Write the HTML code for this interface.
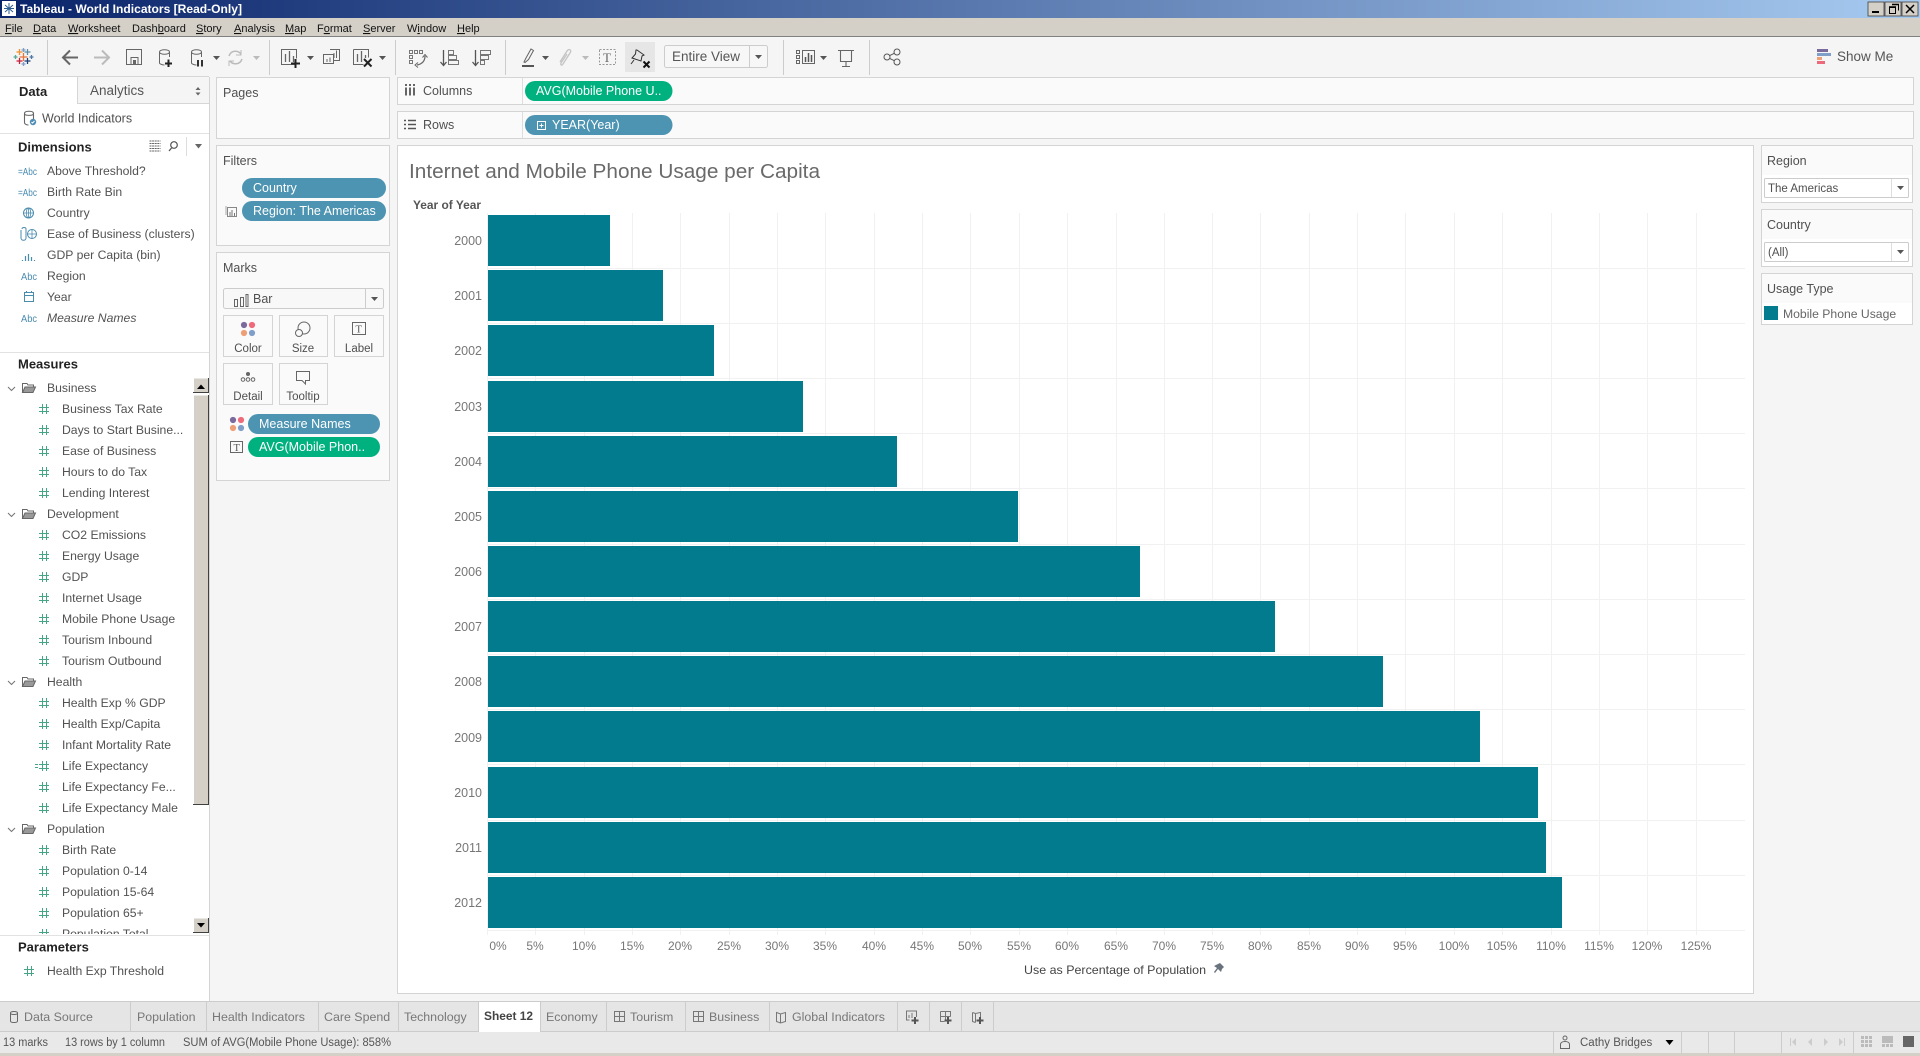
<!DOCTYPE html>
<html><head><meta charset="utf-8"><title>Tableau - World Indicators</title>
<style>
html,body{margin:0;padding:0;background:#f5f5f5;overflow:hidden}
svg{display:block}
text{font-family:"Liberation Sans",sans-serif;font-size:12.5px;fill:#505050}
.l text,text.l{font-size:12.2px;fill:#525252}
.m{font-size:11px;fill:#111}
.b{font-weight:bold;fill:#222;font-size:13px}
.w{fill:#fff}
.g{fill:#777;font-size:12.4px}
.s{font-size:11.5px;fill:#555}
.a{fill:#777;font-size:12px;text-anchor:middle}
.y{fill:#777;font-size:12.5px;text-anchor:end}
.ic{fill:none;stroke:#555;stroke-width:1.2}
.c{fill:#fafafa;stroke:#d4d4d4}
.ln{stroke:#f1f1f1;stroke-width:1;fill:none}
.bar{fill:#027b8e}
</style></head><body>
<svg xmlns="http://www.w3.org/2000/svg" width="1920" height="1056" viewBox="0 0 1920 1056">
<defs>
<linearGradient id="tg" x1="0" x2="1" y1="0" y2="0"><stop offset="0" stop-color="#0a246a"/><stop offset="1" stop-color="#a6caf0"/></linearGradient>
<g id="h" fill="none" stroke="#45a686" stroke-width="1"><path d="M3.5 0v10M7.5 0v10M0 3.5h10M0 7.5h10"/></g>
<g id="f"><path d="M.5 9.5v-9h4.500l1 1.500h5.500v2" fill="none" stroke="#666"/><path d="M.5 9.5l2.500-5.500h10.500l-2.500 5.500z" fill="#999" stroke="#666"/></g>
<path id="ch" d="M0 0l3.500 3.500L7 0" fill="none" stroke="#777" stroke-width="1.100"/>
<path id="dd" d="M0 0h7l-3.500 4z" fill="#555"/>
<path id="ddl" d="M0 0h7l-3.500 4z" fill="#bbb"/>
<g id="dots"><circle cx="4" cy="4" r="3.100" fill="#7b6a9c"/><circle cx="12" cy="4" r="3.100" fill="#ee6a7a"/><circle cx="4" cy="12" r="3.100" fill="#eda077"/><circle cx="12" cy="12" r="3.100" fill="#7f9fc9"/></g>
</defs>

<rect width="1920" height="1056" fill="#f5f5f5"/>

<!-- title bar -->
<rect width="1920" height="18" fill="url(#tg)"/>
<rect x="2" y="1" width="14" height="15" fill="#fff"/>
<path d="M9 3v11M4 8.500h10M5 5l8 7M13 5l-8 7" stroke="#2a5d92" stroke-width="1" fill="none"/>
<text x="20" y="13" textLength="222" lengthAdjust="spacingAndGlyphs" style="font-size:11.500px;font-weight:bold;fill:#fff">Tableau - World Indicators [Read-Only]</text>
<g>
<rect x="1868" y="2" width="16" height="14" fill="#d4d0c8" stroke="#404040" stroke-width=".8"/><rect x="1872" y="11" width="7" height="2" fill="#000"/>
<rect x="1885" y="2" width="16" height="14" fill="#d4d0c8" stroke="#404040" stroke-width=".8"/><path d="M1889.500 7.500h6v6h-6zM1892.500 4.500h6v6" fill="none" stroke="#000"/><path d="M1889 7h7M1892 4.500h7" stroke="#000" stroke-width="1.500"/>
<rect x="1902" y="2" width="16" height="14" fill="#d4d0c8" stroke="#404040" stroke-width=".8"/><path d="M1906 5l8 8M1914 5l-8 8" stroke="#000" stroke-width="1.500"/>
</g>

<!-- menu bar -->
<rect y="18" width="1920" height="18" fill="#d4d0c8"/>
<rect y="36" width="1920" height="1" fill="#808080"/>
<g>
<text class="m" x="5" y="32"><tspan text-decoration="underline">F</tspan>ile</text>
<text class="m" x="33" y="32"><tspan text-decoration="underline">D</tspan>ata</text>
<text class="m" x="68" y="32"><tspan text-decoration="underline">W</tspan>orksheet</text>
<text class="m" x="132" y="32">Dash<tspan text-decoration="underline">b</tspan>oard</text>
<text class="m" x="196" y="32"><tspan text-decoration="underline">S</tspan>tory</text>
<text class="m" x="234" y="32"><tspan text-decoration="underline">A</tspan>nalysis</text>
<text class="m" x="285" y="32"><tspan text-decoration="underline">M</tspan>ap</text>
<text class="m" x="317" y="32">F<tspan text-decoration="underline">o</tspan>rmat</text>
<text class="m" x="363" y="32"><tspan text-decoration="underline">S</tspan>erver</text>
<text class="m" x="407" y="32">W<tspan text-decoration="underline">i</tspan>ndow</text>
<text class="m" x="457" y="32"><tspan text-decoration="underline">H</tspan>elp</text>
</g>

<!-- toolbar separators -->
<path d="M47.500 40v35M269.500 40v35M395.500 40v35M505.500 40v35M783.500 40v35M869.500 40v35" stroke="#ccc"/>
<!-- tableau logo -->
<g fill="none" stroke-width="1.300">
<path d="M19.500 49v6M16.500 52h6" stroke="#f28e2b"/>
<path d="M27.500 49v6M24.500 52h6" stroke="#5b8fa8"/>
<path d="M15.500 55v4M13.500 57h4" stroke="#59a89c"/>
<path d="M23.500 53v8M19.500 57h8" stroke="#e8743b"/>
<path d="M31.500 55v4M29.500 57h4" stroke="#4e79a7"/>
<path d="M19.500 58v6M16.500 61h6" stroke="#c8203c"/>
<path d="M27.500 58v6M24.500 61h6" stroke="#1f3f77"/>
<path d="M23.500 62v4M21.500 64h4" stroke="#7f9fc9"/>
<path d="M23.500 48v4M21.500 50h4" stroke="#7f9fc9"/>
</g>
<!-- back/forward -->
<path d="M78 57.500H63M70 50.500l-7 7 7 7" fill="none" stroke="#666" stroke-width="2"/>
<path d="M94 57.500h15M102 50.500l7 7-7 7" fill="none" stroke="#bbb" stroke-width="2"/>
<!-- save -->
<path d="M126.500 49.500h15v15h-15z" fill="none" stroke="#666"/><path d="M131 57.500h7v7h-7z" fill="none" stroke="#666"/><rect x="133" y="60" width="3" height="4" fill="#666"/>
<!-- ds add -->
<path d="M159.500 52v11c0 1 3 2 5 2M159.500 52c0-3 10-3 10 0v5M159.500 52c0 3 10 3 10 0" fill="none" stroke="#666"/>
<path d="M168.500 59.500v7.500M165 63.500h7" stroke="#222" stroke-width="2"/>
<!-- ds pause -->
<path d="M191.500 52v11c0 1 3 2 5 2M191.500 52c0-3 10-3 10 0v5M191.500 52c0 3 10 3 10 0" fill="none" stroke="#666"/>
<path d="M198 60v6.500M202 60v6.500" stroke="#333" stroke-width="2"/>
<use href="#dd" x="213" y="56"/>
<!-- refresh -->
<path d="M229 56c2-6 9-6 12-2M242 59c-2 6-9 6-12 2" fill="none" stroke="#bbb" stroke-width="1.500"/><path d="M241 50v5h-5M229 66v-5h5" fill="none" stroke="#bbb"/>
<use href="#ddl" x="253" y="56"/>
<!-- new sheet -->
<path d="M295.500 64.500h-14v-15h15v9" fill="none" stroke="#666"/><path d="M285.500 54v8M289.500 51v11M293.500 56v6" stroke="#666" stroke-width="1.300"/>
<path d="M295.500 59v9M291 63.500h9" stroke="#222" stroke-width="2"/>
<use href="#dd" x="307" y="56"/>
<!-- dup -->
<path d="M330 49.500h9.500v11h-6" fill="none" stroke="#666"/><path d="M323.500 54.500h10v9h-10z" fill="#f5f5f5" stroke="#666"/><path d="M334 53v5M336.500 50.500v7.500M327 59v3M330 57.500v4.500" stroke="#666"/>
<!-- clear -->
<path d="M353.500 49.500h15v8M353.500 49.500v15h10" fill="none" stroke="#666"/><path d="M357.500 54v8M361.500 51v11M365.500 55v3" stroke="#666" stroke-width="1.300"/>
<path d="M364 59l7.500 7.500M371.500 59l-7.500 7.500" stroke="#222" stroke-width="2"/>
<use href="#dd" x="379" y="56"/>
<!-- swap -->
<path d="M409.500 50.500h3v3h-3zM414.500 50.500h3v3h-3zM419.500 50.500h3v3h-3zM409.500 55.500h3v3h-3zM409.500 60.500h3v3h-3z" fill="none" stroke="#777"/>
<path d="M425 56c0 5-3 8-8 9" fill="none" stroke="#666" stroke-width="1.200"/><path d="M422.500 57.500l2.500-3 2.500 3M418 62.500l-3 2.500 3 2.500" fill="none" stroke="#666"/>
<!-- sorts -->
<path d="M443.500 50v15M440.500 62l3 3.500 3-3.500" fill="none" stroke="#555" stroke-width="1.300"/><path d="M448.500 50.500h5v4h-5zM448.500 55.500h8v4h-8zM448.500 60.500h10v4h-10z" fill="none" stroke="#777"/>
<path d="M475.500 50v15M472.500 62l3 3.500 3-3.500" fill="none" stroke="#555" stroke-width="1.300"/><path d="M480.500 50.500h10v4h-10zM480.500 55.500h8v4h-8zM480.500 60.500h4v4h-4z" fill="none" stroke="#777"/>
<!-- highlighter -->
<path d="M524 62l2-4 5-9 2.500 1.500-5 9-3.500 3z" fill="none" stroke="#666"/><rect x="522" y="65" width="12" height="2" fill="#555"/>
<use href="#dd" x="542" y="56"/>
<!-- clip -->
<path d="M560 62l7-11c2-3 5-1 3 2l-7 11c-1 2-3 1-2-1l6-9" fill="none" stroke="#c4c4c4" stroke-width="1.300"/>
<use href="#ddl" x="582" y="56"/>
<!-- T -->
<rect x="599.500" y="49.500" width="16" height="15" fill="none" stroke="#999" stroke-dasharray="2 1.500"/>
<text x="603" y="62" style="font-family:'Liberation Serif',serif;font-size:13px;fill:#666">T</text>
<!-- pin -->
<rect x="625" y="42" width="30" height="30" fill="#e6e6e6"/>
<path d="M637 50l7 5-2 1-1 5-9-3 3.500-4 .5-4zM634 60l-3 4" fill="none" stroke="#333" stroke-width="1"/>
<path d="M643.500 61.500l6 6M649.500 61.500l-6 6" stroke="#111" stroke-width="2"/>
<!-- entire view -->
<rect x="664.500" y="45.500" width="103" height="22" rx="2" fill="#f7f7f7" stroke="#ccc"/><path d="M749.500 46v21" stroke="#ccc"/>
<text x="672" y="61" style="font-size:13.500px;fill:#555">Entire View</text>
<use href="#dd" x="755" y="55"/>
<!-- show me mini -->
<path d="M796.500 50.500h3v3h-3zM796.500 55.500h3v3h-3zM796.500 60.500h3v3h-3zM802.500 50.500h12v13h-12z" fill="none" stroke="#666"/><path d="M805.500 57v5M808.500 53v9M811.500 55v7" stroke="#555" stroke-width="1.500"/>
<use href="#dd" x="820" y="56"/>
<!-- present -->
<path d="M838 50.500h16M840.500 50.500v11h11v-11M846 61.500v5M842 66.500h8" fill="none" stroke="#666" stroke-width="1.100"/>
<!-- share -->
<circle cx="887" cy="57" r="3" fill="none" stroke="#555"/><circle cx="897" cy="52" r="3" fill="none" stroke="#555"/><circle cx="897" cy="62" r="3" fill="none" stroke="#555"/><path d="M889.700 55.600l4.600-2.300M889.700 58.400l4.600 2.300" fill="none" stroke="#555"/>
<!-- show me -->
<rect x="1817" y="49" width="11" height="3" fill="#7b6a9c"/><rect x="1817" y="53" width="14" height="3" fill="#7f9fc9"/><rect x="1817" y="57" width="5" height="3" fill="#eda077"/><rect x="1817" y="61" width="8" height="3" fill="#ee6a7a"/>
<text x="1837" y="61" style="font-size:13.500px;fill:#555">Show Me</text>

<!-- left pane -->
<rect x="0" y="77" width="209" height="924" fill="#fff"/>
<rect x="77" y="77" width="132" height="26" fill="#f5f5f5"/>
<path d="M77.500 77v27M77 103.500h132M0 76.500h209" stroke="#d6d6d6"/>
<rect x="209" y="77" width="1" height="924" fill="#d4d4d4"/>
<text x="19" y="96" style="font-weight:bold;font-size:13px;fill:#222">Data</text>
<text x="90" y="95" style="font-size:13.500px;fill:#555">Analytics</text>
<path d="M195.500 90l2.500-3 2.500 3zM195.500 92.500l2.500 3 2.500-3z" fill="#666"/>
<path d="M24.500 113.500c0-3 9-3 9 0v7M24.500 113.500c0 2.500 9 2.500 9 0M24.500 113.500v9c0 1.500 2 2.500 4 2.500" fill="none" stroke="#666" stroke-width="1.100"/>
<circle cx="33" cy="122" r="3.200" fill="#4f8fb5"/><path d="M31.500 122l1 1 2-2" stroke="#fff" fill="none"/>
<text x="42" y="122.500">World Indicators</text>
<rect y="133" width="209" height="1" fill="#e2e2e2"/>

<text class="b" x="18" y="151.500">Dimensions</text>
<path d="M149.500 141h11M149.500 143.500h11M149.500 146h11M149.500 148.500h11M149.500 151h11" stroke="#666" stroke-dasharray="2 .6"/>
<circle cx="174" cy="145" r="3.300" class="ic"/><path d="M171.500 148l-2.500 3" stroke="#555" stroke-width="1.300"/>
<path d="M186.500 137v19" stroke="#ddd"/>
<path d="M195 144h7l-3.500 4.500z" fill="#666"/>

<!-- dimensions -->
<g>
<text x="18" y="175" textLength="19" lengthAdjust="spacingAndGlyphs" style="font-size:10.500px;fill:#4a8bb0">=Abc</text>
<text x="18" y="196" textLength="19" lengthAdjust="spacingAndGlyphs" style="font-size:10.500px;fill:#4a8bb0">=Abc</text>
<circle cx="28.500" cy="213" r="5" fill="none" stroke="#4a8bb0"/><path d="M23.500 213h10M28.500 208v10" stroke="#4a8bb0" stroke-width=".8"/><ellipse cx="28.500" cy="213" rx="2.200" ry="5" fill="none" stroke="#4a8bb0" stroke-width=".8"/>
<path d="M22 229c0-2 4-2 4 0v9c0 3-5 3-5 0v-8" fill="none" stroke="#4a8bb0" stroke-width="1"/><circle cx="32" cy="234" r="4.500" fill="none" stroke="#4a8bb0"/><path d="M27.500 234h9M32 229.500v9" stroke="#4a8bb0" stroke-width=".8"/>
<path d="M22.500 261v-1M25.500 261v-5M28.500 261v-7M31.500 261v-4M34.500 261v-1" stroke="#4a8bb0" stroke-width="1.200"/>
<text x="21" y="280" textLength="16" lengthAdjust="spacingAndGlyphs" style="font-size:10.500px;fill:#4a8bb0">Abc</text>
<rect x="24.500" y="292.500" width="9" height="9" fill="none" stroke="#4a8bb0"/><path d="M24.500 295.500h9M26.500 291v2M31.500 291v2" stroke="#4a8bb0"/>
<text x="21" y="322" textLength="16" lengthAdjust="spacingAndGlyphs" style="font-size:10.500px;fill:#4a8bb0">Abc</text>
</g>
<g class="l">
<text x="47" y="175">Above Threshold?</text>
<text x="47" y="196">Birth Rate Bin</text>
<text x="47" y="217">Country</text>
<text x="47" y="238">Ease of Business (clusters)</text>
<text x="47" y="259">GDP per Capita (bin)</text>
<text x="47" y="280">Region</text>
<text x="47" y="301">Year</text>
<text x="47" y="322" font-style="italic">Measure Names</text>
</g>
<rect y="352" width="209" height="1" fill="#e2e2e2"/>

<!-- measures -->
<text class="b" x="18" y="368.500">Measures</text>
<g class="l">
<use href="#ch" x="8" y="387"/><use href="#f" x="22" y="383"/><text x="47" y="392">Business</text>
<use href="#h" x="39" y="404"/><text x="62" y="413">Business Tax Rate</text>
<use href="#h" x="39" y="425"/><text x="62" y="434">Days to Start Busine...</text>
<use href="#h" x="39" y="446"/><text x="62" y="455">Ease of Business</text>
<use href="#h" x="39" y="467"/><text x="62" y="476">Hours to do Tax</text>
<use href="#h" x="39" y="488"/><text x="62" y="497">Lending Interest</text>
<use href="#ch" x="8" y="513"/><use href="#f" x="22" y="509"/><text x="47" y="518">Development</text>
<use href="#h" x="39" y="530"/><text x="62" y="539">CO2 Emissions</text>
<use href="#h" x="39" y="551"/><text x="62" y="560">Energy Usage</text>
<use href="#h" x="39" y="572"/><text x="62" y="581">GDP</text>
<use href="#h" x="39" y="593"/><text x="62" y="602">Internet Usage</text>
<use href="#h" x="39" y="614"/><text x="62" y="623">Mobile Phone Usage</text>
<use href="#h" x="39" y="635"/><text x="62" y="644">Tourism Inbound</text>
<use href="#h" x="39" y="656"/><text x="62" y="665">Tourism Outbound</text>
<use href="#ch" x="8" y="681"/><use href="#f" x="22" y="677"/><text x="47" y="686">Health</text>
<use href="#h" x="39" y="698"/><text x="62" y="707">Health Exp % GDP</text>
<use href="#h" x="39" y="719"/><text x="62" y="728">Health Exp/Capita</text>
<use href="#h" x="39" y="740"/><text x="62" y="749">Infant Mortality Rate</text>
<path d="M35 764.500h3M35 767.500h3" stroke="#45a686"/><use href="#h" x="39" y="761"/><text x="62" y="770">Life Expectancy</text>
<use href="#h" x="39" y="782"/><text x="62" y="791">Life Expectancy Fe...</text>
<use href="#h" x="39" y="803"/><text x="62" y="812">Life Expectancy Male</text>
<use href="#ch" x="8" y="828"/><use href="#f" x="22" y="824"/><text x="47" y="833">Population</text>
<use href="#h" x="39" y="845"/><text x="62" y="854">Birth Rate</text>
<use href="#h" x="39" y="866"/><text x="62" y="875">Population 0-14</text>
<use href="#h" x="39" y="887"/><text x="62" y="896">Population 15-64</text>
<use href="#h" x="39" y="908"/><text x="62" y="917">Population 65+</text>
<use href="#h" x="39" y="929"/><text x="62" y="938">Population Total</text>
</g>
<rect x="0" y="934" width="209" height="67" fill="#fff"/>
<rect y="935" width="209" height="1" fill="#e2e2e2"/>
<!-- scrollbar -->
<rect x="193" y="378" width="16" height="556" fill="#fff"/>
<rect x="193" y="378" width="15" height="15" fill="#d4d0c8"/><path d="M193.500 393v-15h15" stroke="#fff" fill="none"/><path d="M193 392.500h15.500M208.500 378v15" stroke="#404040"/>
<path d="M197 389h8l-4-4.500z" fill="#000"/>
<rect x="193" y="395" width="15" height="410" fill="#d4d0c8"/><path d="M193.500 805v-410h15" stroke="#fff" fill="none"/><path d="M193 804.500h15.500M208.500 395v410" stroke="#404040"/>
<rect x="193" y="918" width="15" height="15" fill="#d4d0c8"/><path d="M193.500 933v-15h15" stroke="#fff" fill="none"/><path d="M193 932.500h15.500M208.500 918v15" stroke="#404040"/>
<path d="M197 923h8l-4 4.500z" fill="#000"/>
<!-- parameters -->
<text class="b" x="18" y="951.500">Parameters</text>
<use href="#h" x="24" y="966"/><text class="l" x="47" y="975">Health Exp Threshold</text>

<!-- middle cards -->
<rect class="c" x="216.500" y="77.500" width="173" height="61"/>
<text x="223" y="97">Pages</text>
<rect class="c" x="216.500" y="145.500" width="173" height="100"/>
<text x="223" y="165">Filters</text>
<rect x="242" y="178" width="144" height="20" rx="10" fill="#4c94b2"/>
<text class="w" x="253" y="192">Country</text>
<rect x="242" y="201" width="144" height="20" rx="10" fill="#4c94b2"/>
<text class="w" x="253" y="215">Region: The Americas</text>
<rect x="227.500" y="207.500" width="9" height="9" fill="none" stroke="#888"/><path d="M226 206v9" stroke="#aaa"/><path d="M230 216v-4M232 216v-6M234.500 216v-3" stroke="#777"/>
<rect class="c" x="216.500" y="252.500" width="173" height="228"/>
<text x="223" y="272">Marks</text>
<rect x="223.500" y="288.500" width="160" height="20" rx="2" fill="#f8f8f8" stroke="#ccc"/><path d="M365.500 289v19" stroke="#ccc"/>
<path d="M234.500 299.500h3v7h-3zM240.500 297.500h3v9h-3zM246 294.500h2v12h-2z" fill="none" stroke="#666"/>
<text x="253" y="303">Bar</text>
<use href="#dd" x="371" y="297"/>
<rect x="223.500" y="315.500" width="49" height="41" fill="#fafafa" stroke="#d4d4d4"/>
<rect x="279.500" y="315.500" width="48" height="41" fill="#fafafa" stroke="#d4d4d4"/>
<rect x="334.500" y="315.500" width="49" height="41" fill="#fafafa" stroke="#d4d4d4"/>
<rect x="223.500" y="363.500" width="49" height="41" fill="#fafafa" stroke="#d4d4d4"/>
<rect x="279.500" y="363.500" width="48" height="41" fill="#fafafa" stroke="#d4d4d4"/>
<use href="#dots" x="240" y="321"/>
<circle cx="304" cy="328" r="6" fill="none" stroke="#666"/><circle cx="299" cy="333" r="3.500" fill="#fafafa" stroke="#666"/>
<rect x="352.500" y="322.500" width="13" height="12" fill="none" stroke="#666"/>
<text x="355.500" y="332.500" style="font-family:'Liberation Serif',serif;font-size:10.500px;fill:#555">T</text>
<text x="248" y="352" text-anchor="middle" style="font-size:11.500px">Color</text>
<text x="303" y="352" text-anchor="middle" style="font-size:11.500px">Size</text>
<text x="359" y="352" text-anchor="middle" style="font-size:11.500px">Label</text>
<circle cx="248" cy="374" r="2" fill="#666"/><circle cx="243" cy="379.500" r="1.800" fill="none" stroke="#666"/><circle cx="248" cy="379.500" r="1.800" fill="none" stroke="#666"/><circle cx="253" cy="379.500" r="1.800" fill="none" stroke="#666"/>
<path d="M296.500 371.500h13v9h-4v3.500l-3.500-3.500h-5.500z" fill="none" stroke="#666"/>
<text x="248" y="400" text-anchor="middle" style="font-size:11.500px">Detail</text>
<text x="303" y="400" text-anchor="middle" style="font-size:11.500px">Tooltip</text>
<use href="#dots" x="229" y="416"/>
<rect x="248" y="414" width="132" height="20" rx="10" fill="#4c94b2"/>
<text class="w" x="259" y="428">Measure Names</text>
<rect x="230.500" y="441.500" width="12" height="11" fill="none" stroke="#666"/><text x="233.500" y="451" style="font-family:'Liberation Serif',serif;font-size:10.500px;fill:#555">T</text>
<rect x="248" y="437" width="132" height="20" rx="10" fill="#00b180"/>
<text class="w" x="259" y="451">AVG(Mobile Phon..</text>

<!-- shelves -->
<rect class="c" x="397.500" y="77.500" width="1516" height="27"/>
<rect class="c" x="397.500" y="111.500" width="1516" height="27"/>
<path d="M522.500 78v26M522.500 112v26" stroke="#ddd"/>
<path d="M406 84v2M410 84v2M414 84v2" stroke="#666" stroke-width="2"/><path d="M406 87.500v8M410 87.500v8M414 87.500v8" stroke="#666" stroke-width="2"/>
<text x="423" y="95">Columns</text>
<path d="M404 120.500h2M408 120.500h8M404 124.500h2M408 124.500h8M404 128.500h2M408 128.500h8" stroke="#555" stroke-width="1.500"/>
<text x="423" y="129">Rows</text>
<rect x="525" y="81" width="147.500" height="20" rx="10" fill="#00b180"/>
<text class="w" x="536" y="95">AVG(Mobile Phone U..</text>
<rect x="525" y="115" width="147.500" height="20" rx="10" fill="#4c94b2"/>
<rect x="537.500" y="121.500" width="8" height="8" fill="none" stroke="#fff"/><path d="M539.500 125.500h4M541.500 123.500v4" stroke="#fff"/>
<text class="w" x="552" y="129">YEAR(Year)</text>

<!-- viewer -->
<rect x="397.500" y="145.500" width="1356" height="848" fill="#fff" stroke="#d4d4d4"/>
<text x="409" y="178" textLength="411" lengthAdjust="spacingAndGlyphs" style="font-size:20px;fill:#6a6a6a">Internet and Mobile Phone Usage per Capita</text>
<text x="413" y="209" textLength="68" lengthAdjust="spacingAndGlyphs" style="font-size:12px;font-weight:bold;fill:#555">Year of Year</text>

<!-- grid -->
<g class="ln">
<path d="M487.500 213v722M535.500 213v722M584.500 213v722M632.500 213v722M680.500 213v722M729.500 213v722M777.500 213v722M825.500 213v722M874.500 213v722M922.500 213v722M970.500 213v722M1019.500 213v722M1067.500 213v722M1116.500 213v722M1164.500 213v722M1212.500 213v722M1260.500 213v722M1309.500 213v722M1357.500 213v722M1405.500 213v722M1454.500 213v722M1502.500 213v722M1551.500 213v722M1599.500 213v722M1647.500 213v722M1696.500 213v722"/>
<path d="M487 268.500h1258M487 323.500h1258M487 378.500h1258M487 433.500h1258M487 488.500h1258M487 544.500h1258M487 599.500h1258M487 654.500h1258M487 709.500h1258M487 764.500h1258M487 820.500h1258M487 875.500h1258M487 930.500h1258"/>
</g>
<!-- bars -->
<rect class="bar" x="488" y="215" width="122" height="51"/>
<rect class="bar" x="488" y="270" width="175" height="51"/>
<rect class="bar" x="488" y="325" width="226" height="51"/>
<rect class="bar" x="488" y="381" width="315" height="51"/>
<rect class="bar" x="488" y="436" width="409" height="51"/>
<rect class="bar" x="488" y="491" width="530" height="51"/>
<rect class="bar" x="488" y="546" width="652" height="51"/>
<rect class="bar" x="488" y="601" width="787" height="51"/>
<rect class="bar" x="488" y="656" width="895" height="51"/>
<rect class="bar" x="488" y="711" width="992" height="51"/>
<rect class="bar" x="488" y="767" width="1050" height="51"/>
<rect class="bar" x="488" y="822" width="1058" height="51"/>
<rect class="bar" x="488" y="877" width="1074" height="51"/>
<!-- row labels -->
<text class="y" x="482" y="245">2000</text>
<text class="y" x="482" y="300">2001</text>
<text class="y" x="482" y="355">2002</text>
<text class="y" x="482" y="411">2003</text>
<text class="y" x="482" y="466">2004</text>
<text class="y" x="482" y="521">2005</text>
<text class="y" x="482" y="576">2006</text>
<text class="y" x="482" y="631">2007</text>
<text class="y" x="482" y="686">2008</text>
<text class="y" x="482" y="742">2009</text>
<text class="y" x="482" y="797">2010</text>
<text class="y" x="482" y="852">2011</text>
<text class="y" x="482" y="907">2012</text>
<!-- axis labels -->
<text class="a" x="498" y="950">0%</text>
<text class="a" x="535" y="950">5%</text>
<text class="a" x="584" y="950">10%</text>
<text class="a" x="632" y="950">15%</text>
<text class="a" x="680" y="950">20%</text>
<text class="a" x="729" y="950">25%</text>
<text class="a" x="777" y="950">30%</text>
<text class="a" x="825" y="950">35%</text>
<text class="a" x="874" y="950">40%</text>
<text class="a" x="922" y="950">45%</text>
<text class="a" x="970" y="950">50%</text>
<text class="a" x="1019" y="950">55%</text>
<text class="a" x="1067" y="950">60%</text>
<text class="a" x="1116" y="950">65%</text>
<text class="a" x="1164" y="950">70%</text>
<text class="a" x="1212" y="950">75%</text>
<text class="a" x="1260" y="950">80%</text>
<text class="a" x="1309" y="950">85%</text>
<text class="a" x="1357" y="950">90%</text>
<text class="a" x="1405" y="950">95%</text>
<text class="a" x="1454" y="950">100%</text>
<text class="a" x="1502" y="950">105%</text>
<text class="a" x="1551" y="950">110%</text>
<text class="a" x="1599" y="950">115%</text>
<text class="a" x="1647" y="950">120%</text>
<text class="a" x="1696" y="950">125%</text>
<text x="1024" y="974" textLength="182" lengthAdjust="spacingAndGlyphs" style="font-size:12px;fill:#444">Use as Percentage of Population</text>
<path d="M1216 965l4-2 4 4-2 2-1 3-3-3-3 4-1-1 3-4-3-2z" fill="#69737d"/>

<!-- right cards -->
<rect class="c" x="1761.500" y="145.500" width="151" height="57"/><rect x="1762" y="175" width="150" height="27" fill="#fff"/>
<text x="1767" y="165">Region</text>
<rect x="1764.500" y="178.500" width="144" height="19" rx="1" fill="#fff" stroke="#ccc"/><path d="M1891.500 179v18" stroke="#ddd"/>
<text x="1768" y="192" style="font-size:11.500px">The Americas</text><use href="#dd" x="1897" y="186"/>
<rect class="c" x="1761.500" y="209.500" width="151" height="57"/><rect x="1762" y="239" width="150" height="27" fill="#fff"/>
<text x="1767" y="229">Country</text>
<rect x="1764.500" y="242.500" width="144" height="19" rx="1" fill="#fff" stroke="#ccc"/><path d="M1891.500 243v18" stroke="#ddd"/>
<text x="1768" y="256" style="font-size:11.500px">(All)</text><use href="#dd" x="1897" y="250"/>
<rect class="c" x="1761.500" y="273.500" width="151" height="51"/><rect x="1762" y="303" width="150" height="21" fill="#fff"/>
<text x="1767" y="293">Usage Type</text>
<rect x="1764" y="306" width="14" height="14" fill="#027b8e"/>
<text class="l" x="1783" y="318" style="fill:#666">Mobile Phone Usage</text>

<!-- tabs -->
<rect y="1002" width="1920" height="30" fill="#e5e5e5"/>
<path d="M0 1001.500h1920M0 1031.500h1920" stroke="#ccc"/>
<rect x="479" y="1002" width="62" height="30" fill="#fff"/>
<path d="M130.500 1002v30M206.500 1002v30M318.500 1002v30M398.500 1002v30M478.500 1002v30M540.500 1002v30M606.500 1002v30M685.500 1002v30M769.500 1002v30M897.500 1002v30M929.500 1002v30M961.500 1002v30M993.500 1002v30" stroke="#ccc"/>
<path d="M10.500 1013c0-2 7-2 7 0v8c0 2-7 2-7 0zM10.500 1013c0 2 7 2 7 0" fill="none" stroke="#666"/>
<text class="g" x="24" y="1021">Data Source</text>
<text class="g" x="137" y="1021">Population</text>
<text class="g" x="212" y="1021">Health Indicators</text>
<text class="g" x="324" y="1021">Care Spend</text>
<text class="g" x="404" y="1021">Technology</text>
<text x="484" y="1020" textLength="49" lengthAdjust="spacingAndGlyphs" style="font-weight:bold;font-size:12px;fill:#444">Sheet 12</text>
<text class="g" x="546" y="1021">Economy</text>
<path d="M614.500 1011.500h10v10h-10zM619.500 1011.500v10M614.500 1016.500h10" fill="none" stroke="#777"/>
<text class="g" x="630" y="1021">Tourism</text>
<path d="M693.500 1011.500h10v10h-10zM698.500 1011.500v10M693.500 1016.500h10" fill="none" stroke="#777"/>
<text class="g" x="709" y="1021">Business</text>
<path d="M776.500 1012.500l4 1.500 5-1.500v9l-5 1.500-4-1.500zM780.500 1014v9" fill="none" stroke="#777"/>
<text class="g" x="792" y="1021">Global Indicators</text>
<path d="M909.500 1020h-3v-9h10v6" fill="none" stroke="#777"/><path d="M909 1018v-3M912 1018v-5" stroke="#777"/><path d="M915 1017v7M911.500 1020.500h7" stroke="#555" stroke-width="2"/>
<path d="M940.500 1011.500h10v5M940.500 1011.500v10h4M945.500 1011.500v10M940.500 1016.500h10" fill="none" stroke="#777"/><path d="M948 1017v7M944.500 1020.500h7" stroke="#555" stroke-width="2"/>
<path d="M972.500 1012.500l3 1 5-1v5M972.500 1012.500v9l3 1M975.500 1013.500v9" fill="none" stroke="#777"/><path d="M980 1017v7M976.500 1020.500h7" stroke="#555" stroke-width="2"/>

<!-- status bar -->
<rect y="1032" width="1920" height="21" fill="#e9e9e9"/>
<rect y="1053" width="1920" height="3" fill="#d4d0c8"/>
<text class="s" x="3" y="1046" textLength="45" lengthAdjust="spacingAndGlyphs">13 marks</text>
<text class="s" x="65" y="1046" textLength="100" lengthAdjust="spacingAndGlyphs">13 rows by 1 column</text>
<text class="s" x="183" y="1046" textLength="208" lengthAdjust="spacingAndGlyphs">SUM of AVG(Mobile Phone Usage): 858%</text>
<path d="M1553.500 1032v21M1681.500 1032v21M1708.500 1032v21M1734.500 1032v21M1781.500 1032v21M1853.500 1032v21" stroke="#ccc"/>
<circle cx="1565" cy="1038" r="2" fill="none" stroke="#666"/><path d="M1560.500 1048.500v-4c0-2 2-3 4.500-3s4.500 1 4.500 3v4z" fill="none" stroke="#666"/>
<text class="s" x="1580" y="1046">Cathy Bridges</text>
<path d="M1665.500 1040h8l-4 5z" fill="#000"/>
<g fill="#ccc">
<path d="M1796 1038l-4 4 4 4zM1790 1038h1v8h-1z"/><path d="M1812 1038l-4 4 4 4z"/><path d="M1824 1038l4 4-4 4z"/><path d="M1839 1038l4 4-4 4zM1844 1038h1v8h-1z"/>
</g>
<g fill="#bbb">
<rect x="1861" y="1036" width="3" height="3"/><rect x="1865" y="1036" width="3" height="3"/><rect x="1869" y="1036" width="3" height="3"/>
<rect x="1861" y="1040" width="3" height="3"/><rect x="1865" y="1040" width="3" height="3"/><rect x="1869" y="1040" width="3" height="3"/>
<rect x="1861" y="1044" width="3" height="3"/><rect x="1865" y="1044" width="3" height="3"/><rect x="1869" y="1044" width="3" height="3"/>
<rect x="1882" y="1036" width="11" height="7"/><rect x="1882" y="1044" width="3" height="3"/><rect x="1886" y="1044" width="3" height="3"/><rect x="1890" y="1044" width="3" height="3"/>
</g>
<rect x="1903" y="1036" width="11" height="11" fill="#666"/>
</svg>
</body></html>
